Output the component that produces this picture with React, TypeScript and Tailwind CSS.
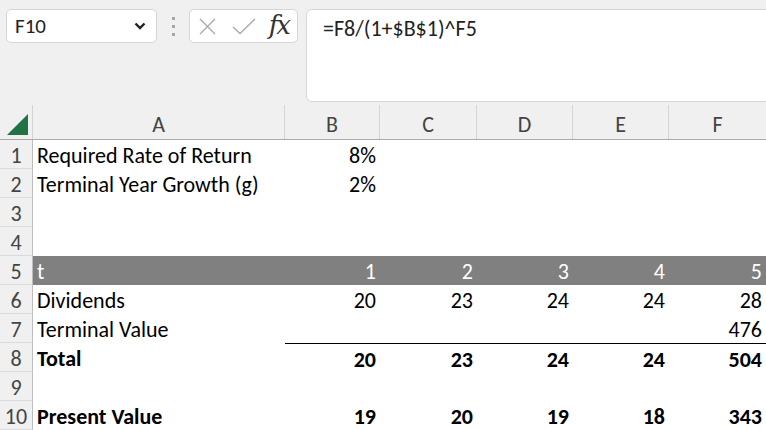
import React from "react";

const cols = ["A", "B", "C", "D", "E", "F"];
const colW = ["w-[252px]", "w-[95px]", "w-[97px]", "w-[96px]", "w-[96px]", "w-[97px]"];

type Row = {
  n: number;
  label?: string;
  vals?: (string | number)[];
  bold?: boolean;
  band?: boolean;
  line?: boolean;
};

const rows: Row[] = [
  { n: 1, label: "Required Rate of Return", vals: ["8%"] },
  { n: 2, label: "Terminal Year Growth (g)", vals: ["2%"] },
  { n: 3 },
  { n: 4 },
  { n: 5, label: "t", vals: [1, 2, 3, 4, 5], band: true },
  { n: 6, label: "Dividends", vals: [20, 23, 24, 24, 28] },
  { n: 7, label: "Terminal Value", vals: ["", "", "", "", 476] },
  { n: 8, label: "Total", vals: [20, 23, 24, 24, 504], bold: true, line: true },
  { n: 9 },
  { n: 10, label: "Present Value", vals: [19, 20, 19, 18, 343], bold: true },
];

export default function App() {
  return (
    <div className="w-[766px] h-[430px] overflow-hidden bg-[#f0f0f0] text-black font-['Carlito','Lato',sans-serif]">
      {/* Formula bar */}
      <div className="h-[105px] flex items-start pt-[9px] pl-[6px]">
        <div className="w-[151px] h-[34px] shrink-0 bg-white border border-[#d6d6d6] rounded-[5px] flex items-center justify-between pl-[8px] pr-[10px]">
          <span className="text-[21px] text-[#222] pt-[1px]">F10</span>
          <svg width="12" height="8" viewBox="0 0 12 8">
            <polyline points="1.5,1.5 6,6 10.5,1.5" fill="none" stroke="#222" strokeWidth="2.4" />
          </svg>
        </div>
        <div className="w-[32px] h-[34px] shrink-0 flex flex-col items-center justify-center gap-[5px]">
          <div className="w-[3px] h-[3px] bg-[#a6a6a6]" />
          <div className="w-[3px] h-[3px] bg-[#a6a6a6]" />
          <div className="w-[3px] h-[3px] bg-[#a6a6a6]" />
        </div>
        <div className="w-[109px] h-[34px] shrink-0 bg-white border border-[#d6d6d6] rounded-[5px] flex items-center pl-[9px] pr-[6px]">
          <svg width="17" height="17" viewBox="0 0 17 17">
            <path d="M1 1 L16 16 M16 1 L1 16" stroke="#a8a8a8" strokeWidth="1.3" fill="none" />
          </svg>
          <svg width="24" height="17" viewBox="0 0 24 17" className="ml-[16px]">
            <polyline points="1,9 8,15.5 23,1" stroke="#a8a8a8" strokeWidth="1.3" fill="none" />
          </svg>
          <span className="ml-auto text-[26px] italic font-['DejaVu_Serif',serif] tracking-[-2px] text-[#333] leading-none pb-[3px] pr-[2px]">fx</span>
        </div>
        <div className="ml-[8px] w-[470px] h-[93px] shrink-0 bg-white border border-[#d6d6d6] rounded-[6px] pl-[16px] pt-[2px]">
          <span className="text-[22px] text-[#222]">=F8/(1+$B$1)^F5</span>
        </div>
      </div>

      {/* Grid */}
      <div className="flex flex-col">
        {/* Column headers */}
        <div className="flex h-[35px] border-b border-[#ababab]">
          <div className="w-[33px] h-full flex items-end justify-end pr-[3px] pb-[3px] border-r border-[#d4d4d4] shrink-0">
            <svg width="22" height="22" viewBox="0 0 22 22">
              <polygon points="21,0 21,21 0,21" fill="#217346" />
            </svg>
          </div>
          {cols.map((c, i) => (
            <div
              key={c}
              className={`${colW[i]} h-full shrink-0 flex items-end justify-center pb-[2px] text-[22px] text-[#444] ${i < 5 ? "border-r border-[#d4d4d4]" : ""}`}
            >
              <span className="leading-none mb-[1px]">{c}</span>
            </div>
          ))}
        </div>

        {rows.map((r) => (
          <div key={r.n} className="flex h-[29px]">
            <div className="w-[33px] h-full flex items-center justify-center pt-[2px] text-[22px] text-[#444] border-r border-[#bdbdbd] border-b border-b-[#dadada] shrink-0">
              {r.n}
            </div>
            <div
              className={`flex flex-1 h-full text-[22px] ${r.band ? "bg-[#808080] text-white" : "bg-white"} ${r.bold ? "font-bold" : ""}`}
            >
              <div className="w-[252px] h-full flex items-center pl-[4px] pt-[2px] shrink-0">{r.label}</div>
              {cols.slice(1).map((c, i) => (
                <div
                  key={c}
                  className={`${colW[i + 1]} h-full flex items-center justify-end pr-[4px] pt-[2px] shrink-0 ${r.line ? "border-t border-black" : ""}`}
                >
                  {r.vals?.[i] ?? ""}
                </div>
              ))}
            </div>
          </div>
        ))}
      </div>
    </div>
  );
}
